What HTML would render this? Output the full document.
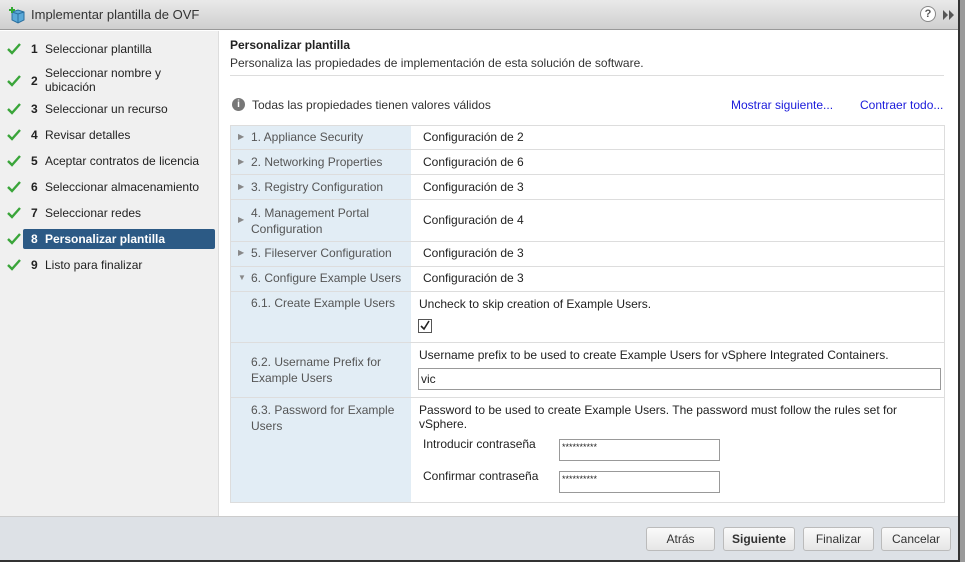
<!DOCTYPE html>
<html><head><meta charset="utf-8"><style>
*{box-sizing:border-box;margin:0;padding:0}
body{width:965px;height:562px;overflow:hidden;background:#9a9a9a;font-family:"Liberation Sans",Arial,sans-serif;font-size:12px;color:#333;position:relative}
#dlg{position:absolute;left:0;top:0;width:960px;height:562px;background:#fff;border-right:2px solid #333;border-bottom:2px solid #333}
#title{position:absolute;left:0;top:0;width:958px;height:30px;background:linear-gradient(#e9e9e9,#cfcfcf);border-bottom:1px solid #999}
#title .t{position:absolute;left:31px;top:7px;font-size:13px;color:#333}
#nav{position:absolute;left:0;top:31px;width:219px;height:485px;background:#f0f0f0;border-right:1px solid #ddd}
.st{position:absolute;left:0;height:20px;width:219px;font-size:12px;color:#222}
.st .ck{position:absolute;left:7px;top:4px}
.st .n{position:absolute;left:31px;top:3px;font-weight:bold}
.st .l{position:absolute;left:45px;top:3px}
.sel{background:#2c5a85;color:#fff;left:23px;width:192px;border-radius:2px}
#footer{position:absolute;left:0;top:516px;width:958px;height:44px;background:#dde1e6;border-top:1px solid #ccc}
.btn{position:absolute;top:527px;height:24px;border:1px solid #bbb;border-radius:3px;background:linear-gradient(#fafafa,#e6e6e6);text-align:center;line-height:22px;font-size:12px;color:#333}
.h1{position:absolute;left:230px;top:38px;font-weight:bold;font-size:12px;color:#222}
.h2{position:absolute;left:230px;top:56px;font-size:12px;color:#333}
.hr{position:absolute;left:230px;top:75px;width:714px;height:1px;background:#ddd}
a{color:#1a1adb;text-decoration:none;position:absolute;top:98px}
#tbl{position:absolute;left:230px;top:125px;width:715px;height:378px;border:1px solid #ddd;background:#fff}
#tbl .lc{position:absolute;left:0;top:0;width:180px;height:376px;background:#e2edf5}
.rl{position:absolute;left:0;width:713px;height:1px;background:#ddd}
.c1{position:absolute;left:20px;color:#555}
.c2{position:absolute;left:192px;color:#222}
.tri{position:absolute;left:7px;font-size:8px;color:#888}
.box{position:absolute;border:1px solid #999;background:#fff;font-size:12px;padding:2px 2px;color:#222}
</style></head><body>
<svg width="0" height="0" style="position:absolute"><defs><symbol id="ck" viewBox="0 0 14 12"><path d="M1 6 L5 10 L13 1" stroke="#3aa53a" stroke-width="2.4" fill="none"/></symbol></defs></svg>
<div id="dlg">
<div id="title">
<svg style="position:absolute;left:8px;top:6px" width="18" height="18" viewBox="0 0 18 18"><path d="M4 6 L10 4 L16 6 L16 14 L10 17 L4 14Z" fill="#5aa9d8" stroke="#2a6f9f"/><path d="M4 6 L10 8 L16 6 M10 8 L10 17" stroke="#2a6f9f" fill="none"/><path d="M1 4h6M4 1v6" stroke="#3a3" stroke-width="2"/></svg>
<div class="t">Implementar plantilla de OVF</div>
<div style="position:absolute;left:920px;top:6px;width:16px;height:16px;border-radius:50%;border:1px solid #888;background:#fff;font-size:11px;font-weight:bold;text-align:center;line-height:14px;color:#555">?</div>
<svg style="position:absolute;left:943px;top:10px" width="12" height="10" viewBox="0 0 12 10"><path d="M0 0 L5 5 L0 10Z M6 0 L11 5 L6 10Z" fill="#555"/></svg>
</div>
<div id="nav">
<div class="st" style="top:8px"><svg class="ck" width="14" height="12"><use href="#ck"/></svg><span class="n">1</span><span class="l">Seleccionar plantilla</span></div>
<div class="st" style="top:34px;height:30px"><svg class="ck" style="top:10px" width="14" height="12"><use href="#ck"/></svg><span class="n" style="top:9px">2</span><span class="l" style="top:1px;line-height:14px">Seleccionar nombre y<br>ubicación</span></div>
<div class="st" style="top:68px"><svg class="ck" width="14" height="12"><use href="#ck"/></svg><span class="n">3</span><span class="l">Seleccionar un recurso</span></div>
<div class="st" style="top:94px"><svg class="ck" width="14" height="12"><use href="#ck"/></svg><span class="n">4</span><span class="l">Revisar detalles</span></div>
<div class="st" style="top:120px"><svg class="ck" width="14" height="12"><use href="#ck"/></svg><span class="n">5</span><span class="l">Aceptar contratos de licencia</span></div>
<div class="st" style="top:146px"><svg class="ck" width="14" height="12"><use href="#ck"/></svg><span class="n">6</span><span class="l">Seleccionar almacenamiento</span></div>
<div class="st" style="top:172px"><svg class="ck" width="14" height="12"><use href="#ck"/></svg><span class="n">7</span><span class="l">Seleccionar redes</span></div>
<div class="st" style="top:198px;width:219px"><svg class="ck" width="14" height="12"><use href="#ck"/></svg><div class="st sel" style="top:0;font-weight:bold"><span class="n" style="left:8px">8</span><span class="l" style="left:22px">Personalizar plantilla</span></div></div>
<div class="st" style="top:224px"><svg class="ck" width="14" height="12"><use href="#ck"/></svg><span class="n">9</span><span class="l">Listo para finalizar</span></div>
</div>
<div class="h1">Personalizar plantilla</div>
<div class="h2">Personaliza las propiedades de implementación de esta solución de software.</div>
<div class="hr"></div>
<div style="position:absolute;left:232px;top:98px;width:13px;height:13px;border-radius:50%;background:#777;color:#fff;font-size:10px;font-weight:bold;text-align:center;line-height:13px">i</div>
<div style="position:absolute;left:252px;top:98px">Todas las propiedades tienen valores válidos</div>
<a style="left:731px">Mostrar siguiente...</a><a style="left:860px">Contraer todo...</a>
<div id="tbl"><div class="lc"></div>
<div class="rl" style="top:23px"></div><div class="rl" style="top:48px"></div><div class="rl" style="top:73px"></div><div class="rl" style="top:115px"></div><div class="rl" style="top:140px"></div><div class="rl" style="top:165px"></div><div class="rl" style="top:216px"></div><div class="rl" style="top:271px"></div>
<span class="tri" style="top:6px">▶</span><span class="c1" style="top:4px">1. Appliance Security</span><span class="c2" style="top:4px">Configuración de 2</span>
<span class="tri" style="top:31px">▶</span><span class="c1" style="top:29px">2. Networking Properties</span><span class="c2" style="top:29px">Configuración de 6</span>
<span class="tri" style="top:56px">▶</span><span class="c1" style="top:54px">3. Registry Configuration</span><span class="c2" style="top:54px">Configuración de 3</span>
<span class="tri" style="top:89px">▶</span><span class="c1" style="top:79px;line-height:16px">4. Management Portal<br>Configuration</span><span class="c2" style="top:87px">Configuración de 4</span>
<span class="tri" style="top:122px">▶</span><span class="c1" style="top:120px">5. Fileserver Configuration</span><span class="c2" style="top:120px">Configuración de 3</span>
<span class="tri" style="top:147px">▼</span><span class="c1" style="top:145px">6. Configure Example Users</span><span class="c2" style="top:145px">Configuración de 3</span>
<span class="c1" style="top:170px">6.1. Create Example Users</span><span class="c2" style="top:171px;left:188px">Uncheck to skip creation of Example Users.</span>
<div class="box" style="left:187px;top:193px;width:14px;height:14px;padding:0;border-color:#555">
<svg width="12" height="12" viewBox="0 0 12 12" style="position:absolute;left:0;top:0"><path d="M2 6 L5 9 L10 1" stroke="#222" stroke-width="1.6" fill="none"/></svg></div>
<span class="c1" style="top:228px;line-height:16px">6.2. Username Prefix for<br>Example Users</span><span class="c2" style="top:222px;left:188px">Username prefix to be used to create Example Users for vSphere Integrated Containers.</span>
<div class="box" style="left:187px;top:242px;width:523px;height:22px;padding-top:3px">vic</div>
<span class="c1" style="top:276px;line-height:16px">6.3. Password for Example<br>Users</span><span class="c2" style="top:277px;left:188px;line-height:14px">Password to be used to create Example Users. The password must follow the rules set for<br>vSphere.</span>
<span class="c2" style="top:311px">Introducir contraseña</span><div class="box" style="left:328px;top:313px;width:161px;height:22px;font-size:9px;padding-top:2px">**********</div>
<span class="c2" style="top:343px">Confirmar contraseña</span><div class="box" style="left:328px;top:345px;width:161px;height:22px;font-size:9px;padding-top:2px">**********</div>
</div>
<div id="footer"></div>
<div class="btn" style="left:646px;width:69px">Atrás</div>
<div class="btn" style="left:723px;width:72px;font-weight:bold">Siguiente</div>
<div class="btn" style="left:803px;width:71px">Finalizar</div>
<div class="btn" style="left:881px;width:70px">Cancelar</div>
</div>
</body></html>
